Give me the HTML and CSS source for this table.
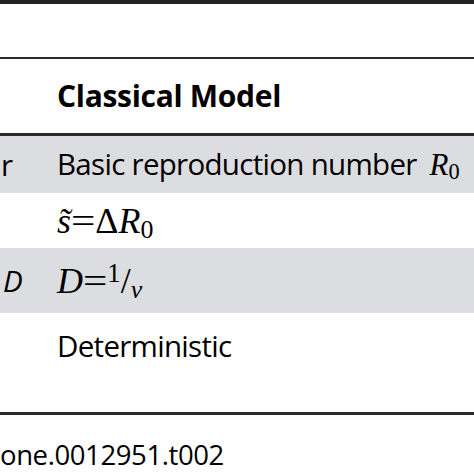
FILE: index.html
```html
<!DOCTYPE html>
<html>
<head>
<meta charset="utf-8">
<link rel="stylesheet" href="styles.css">
</head>
<body>
<div class="page">
  <div class="topbar"></div>
  <div class="spacer"></div>
  <div class="rule"></div>
  <div class="row head">
    <div class="label"></div>
    <div class="cell bold">Classical Model</div>
  </div>
  <div class="rule rule-thick"></div>
  <div class="row gray r1">
    <div class="label l-r">r</div>
    <div class="cell">Basic reproduction number <span class="math m-small"><i>R</i><sub>0</sub></span></div>
  </div>
  <div class="row r2">
    <div class="label"></div>
    <div class="cell"><span class="math"><i>s̃</i><span class="eq">=</span>Δ<i>R</i><sub>0</sub></span></div>
  </div>
  <div class="row gray r3">
    <div class="label l-d"><i>D</i></div>
    <div class="cell"><span class="math"><i>D</i><span class="eq">=</span><sup>1</sup><span class="slash">/</span><sub><i>v</i></sub></span></div>
  </div>
  <div class="row r4">
    <div class="label"></div>
    <div class="cell">Deterministic</div>
  </div>
  <div class="rule rule-thick"></div>
  <div class="caption">one.0012951.t002</div>
</div>
</body>
</html>
```

FILE: styles.css
```css
html, body {
  margin: 0;
  padding: 0;
  background: #ffffff;
}
.page {
  width: 474px;
  height: 474px;
  overflow: hidden;
  font-family: "Open Sans", "Liberation Sans", sans-serif;
  font-size: 29.5px;
  letter-spacing: -0.7px;
  color: #000;
  display: flex;
  flex-direction: column;
}
.topbar {
  height: 4px;
  background: #222;
  flex: none;
}
.spacer {
  height: 53px;
  flex: none;
}
.rule {
  height: 2px;
  background: #2b2b2b;
  flex: none;
}
.rule-thick {
  height: 3px;
}
.row {
  display: grid;
  grid-template-columns: 57px 1fr;
  align-items: center;
  flex: none;
  line-height: 1;
}
.gray {
  background: #dcdde0;
}
.head { height: 74px; }
.r1 { height: 57px; }
.r2 { height: 55px; }
.r3 { height: 65px; }
.r4 {
  height: 99px;
  align-items: start;
}
.r4 .cell { padding-top: 18px; }
.label {
  white-space: nowrap;
}
.l-r { padding-left: 1px; }
.l-d {
  padding-left: 3px;
  font-style: italic;
}
.cell {
  white-space: nowrap;
}
.bold {
  font-weight: 700;
  font-size: 30px;
  letter-spacing: -0.3px;
}
.math {
  font-family: "Liberation Serif", "Times New Roman", serif;
  font-size: 36px;
  letter-spacing: 0;
}
.m-small {
  font-size: 31px;
  margin-left: 6px;
}
.math sub {
  font-size: 0.72em;
  vertical-align: -0.2em;
  line-height: 0;
}
.math sup {
  font-size: 0.74em;
  vertical-align: 0.4em;
  line-height: 0;
}
.eq {
  display: inline-block;
  margin: 0 2px;
  transform: scaleX(1.2);
}
.slash {
  font-size: 1em;
}
.caption {
  height: 61px;
  display: flex;
  align-items: flex-end;
  padding-bottom: 6px;
  box-sizing: border-box;
  font-size: 27.5px;
  letter-spacing: -0.4px;
  line-height: 1;
  white-space: nowrap;
}
```
